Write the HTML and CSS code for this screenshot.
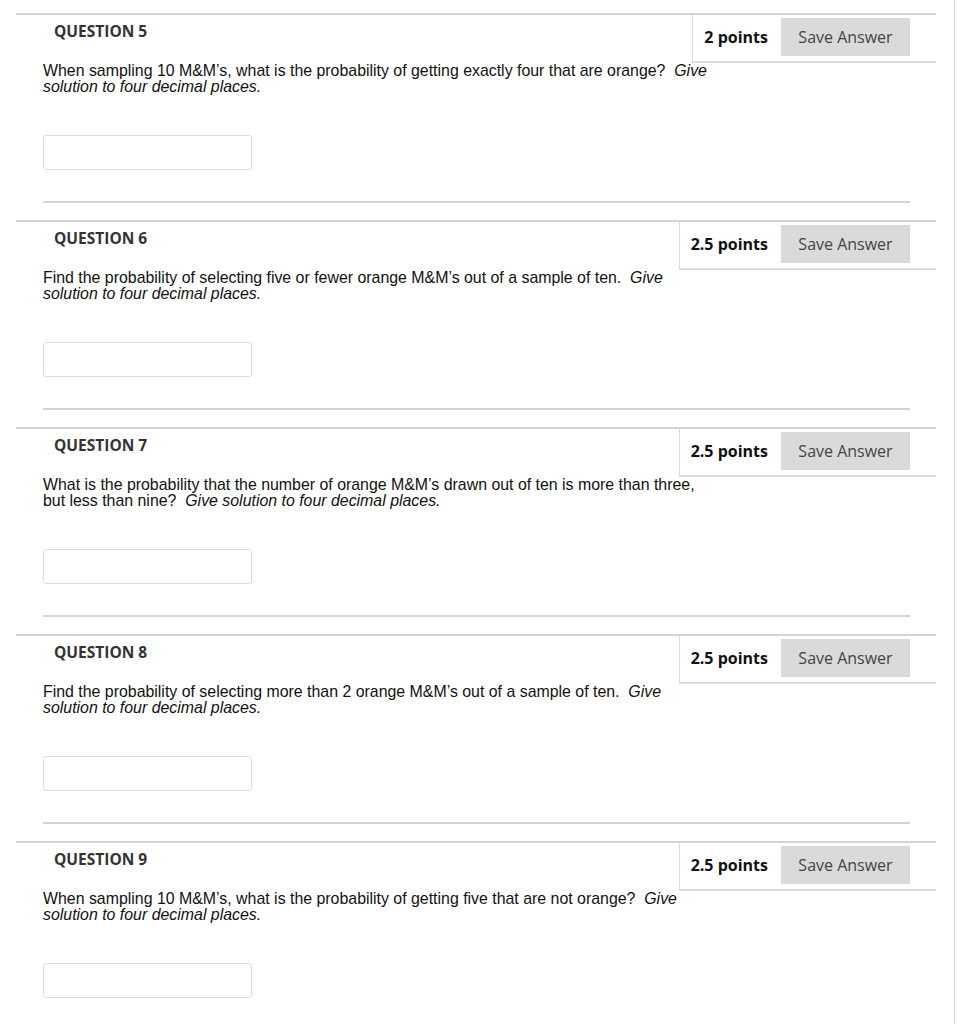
FILE: index.html
```html
<!DOCTYPE html>
<html>
<head>
<meta charset="utf-8">
<link rel="stylesheet" href="styles.css">
</head>
<body>
<div class="page">
  <div class="question">
    <div class="q-head">
      <h3 class="q-title">QUESTION 5</h3>
      <div class="q-meta"><span class="points">2 points</span><button class="save">Save Answer</button></div>
    </div>
    <p class="q-text">When sampling 10 M&amp;M’s, what is the probability of getting exactly four that are orange?&nbsp; <i>Give solution to four decimal places.</i></p>
    <input class="answer" type="text">
    <hr class="sep">
  </div>
  <div class="question">
    <div class="q-head">
      <h3 class="q-title">QUESTION 6</h3>
      <div class="q-meta"><span class="points">2.5 points</span><button class="save">Save Answer</button></div>
    </div>
    <p class="q-text">Find the probability of selecting five or fewer orange M&amp;M’s out of a sample of ten.&nbsp; <i>Give solution to four decimal places.</i></p>
    <input class="answer" type="text">
    <hr class="sep">
  </div>
  <div class="question">
    <div class="q-head">
      <h3 class="q-title">QUESTION 7</h3>
      <div class="q-meta"><span class="points">2.5 points</span><button class="save">Save Answer</button></div>
    </div>
    <p class="q-text">What is the probability that the number of orange M&amp;M’s drawn out of ten is more than three, but less than nine?&nbsp; <i>Give solution to four decimal places.</i></p>
    <input class="answer" type="text">
    <hr class="sep">
  </div>
  <div class="question">
    <div class="q-head">
      <h3 class="q-title">QUESTION 8</h3>
      <div class="q-meta"><span class="points">2.5 points</span><button class="save">Save Answer</button></div>
    </div>
    <p class="q-text">Find the probability of selecting more than 2 orange M&amp;M’s out of a sample of ten.&nbsp; <i>Give solution to four decimal places.</i></p>
    <input class="answer" type="text">
    <hr class="sep">
  </div>
  <div class="question">
    <div class="q-head">
      <h3 class="q-title">QUESTION 9</h3>
      <div class="q-meta"><span class="points">2.5 points</span><button class="save">Save Answer</button></div>
    </div>
    <p class="q-text">When sampling 10 M&amp;M’s, what is the probability of getting five that are not orange?&nbsp; <i>Give solution to four decimal places.</i></p>
    <input class="answer" type="text">
    <hr class="sep">
  </div>
</div>
</body>
</html>
```

FILE: styles.css
```css
html, body {
  margin: 0;
  padding: 0;
  background: #fff;
}

.page {
  width: 955px;
  min-height: 1024px;
  border-right: 1px solid #d6d6d6;
  box-sizing: border-box;
  padding-top: 13px;
}

.question {
  margin-left: 16px;
  width: 920px;
  border-top: 2px solid #d4d4d4;
  height: 205px;
}

.q-head {
  display: flex;
  justify-content: space-between;
  align-items: flex-start;
  height: 48px;
}

.q-title {
  margin: 0;
  padding: 6px 0 0 38px;
  font-family: "Open Sans", sans-serif;
  font-weight: 700;
  font-size: 15.5px;
  line-height: 21px;
  color: #333;
}

.q-meta {
  display: flex;
  align-items: flex-start;
  height: 48px;
  box-sizing: border-box;
  border-left: 1px solid #dcdcdc;
  border-bottom: 2px solid #dcdcdc;
  padding: 3px 26px 0 11px;
  gap: 13px;
}

.points {
  font-family: "Open Sans", sans-serif;
  font-weight: 700;
  font-size: 16px;
  line-height: 38px;
  color: #111;
  white-space: nowrap;
}

.save {
  width: 129px;
  height: 38px;
  border: none;
  background: #dadada;
  font-family: "Open Sans", sans-serif;
  font-size: 16px;
  color: #444;
  padding: 0;
}

.q-text {
  margin: 0 0 0 27px;
  width: 668px;
  font-family: "Liberation Sans", Arial, sans-serif;
  font-size: 15.9px;
  line-height: 16px;
  color: #111;
}

.answer {
  display: block;
  margin: 40px 0 0 27px;
  width: 209px;
  height: 35px;
  box-sizing: border-box;
  border: 1px solid #dedede;
  border-radius: 3px;
  background: #fff;
}

.sep {
  margin: 31px 0 0 27px;
  width: 867px;
  height: 0;
  border: none;
  border-top: 2px solid #d4d4d4;
}
```
